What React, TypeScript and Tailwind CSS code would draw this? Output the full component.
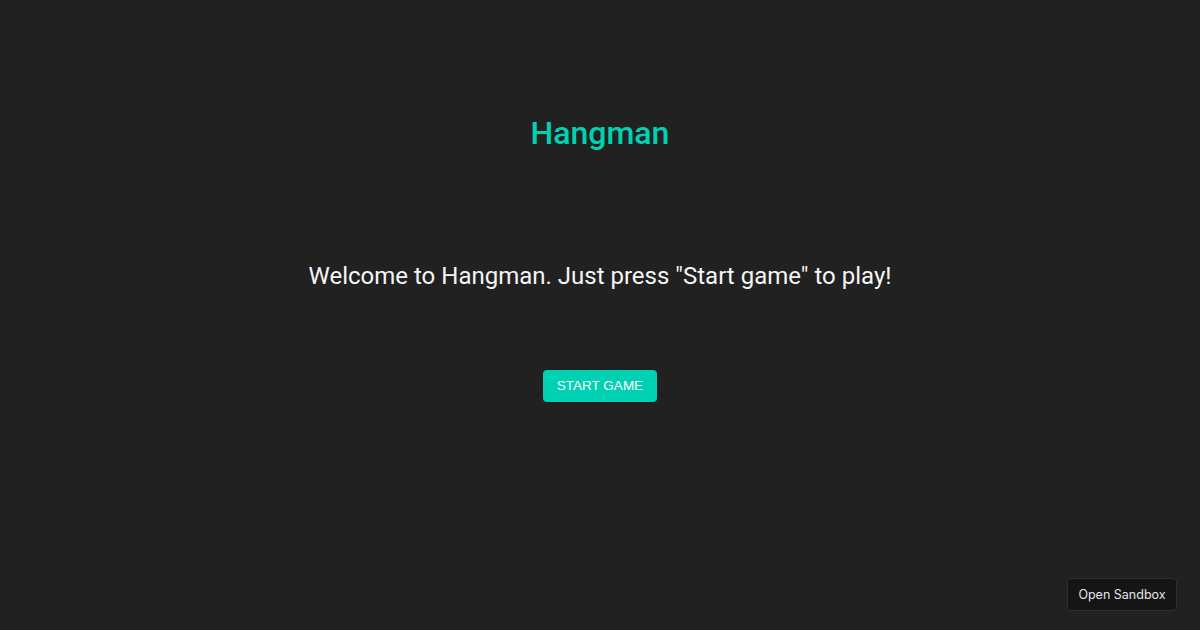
export default function App() {
  return (
    <div className="relative h-[630px] w-full bg-[#212121] font-['Roboto',sans-serif] text-white">
      <div className="flex flex-col items-center">
        <h1 className="mt-[113px] text-[32px] leading-[40px] font-medium text-[#00d1b2]">Hangman</h1>
        <p className="mt-[107px] text-[24px] leading-[32px] text-[#f5f5f5]">
          Welcome to Hangman. Just press "Start game" to play!
        </p>
        <button
          type="button"
          className="mt-[78px] h-[32px] w-[114px] rounded-[4px] bg-[#00d1b2] font-['Liberation_Sans',sans-serif] text-[13.5px] text-white"
        >
          START GAME
        </button>
      </div>
      <button
        type="button"
        className="absolute right-[23px] bottom-[19px] h-[33px] w-[110px] rounded-[4px] border border-[#2e2e2e] bg-[#151515] pt-[1px] font-['Inter',sans-serif] text-[12.5px] text-[#e5e5e5]"
      >
        Open Sandbox
      </button>
    </div>
  );
}
